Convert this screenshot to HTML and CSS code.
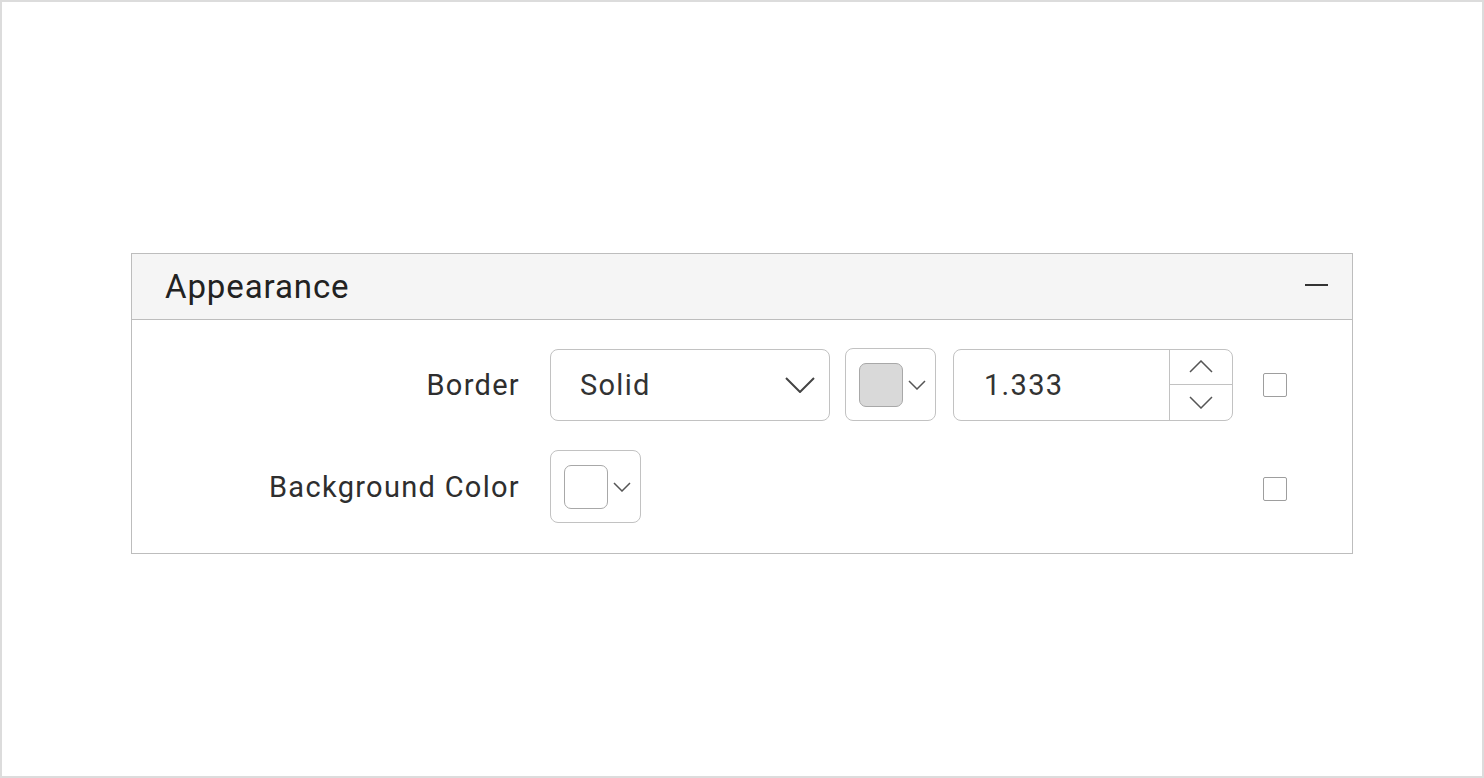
FILE: index.html
```html
<!DOCTYPE html>
<html>
<head>
  <link rel="stylesheet" href="styles.css">
</head>
<body>
  <div class="frame">
    <div class="panel">
      <div class="panel-header">
        <span class="panel-title">Appearance</span>
        <span class="collapse"></span>
      </div>
      <div class="panel-body">
        <div class="row">
          <label class="row-label">Border</label>
          <div class="select">
            <span>Solid</span>
            <svg width="30" height="16" viewBox="0 0 30 16"><path d="M1 1 L15 15 L29 1" fill="none" stroke="#444" stroke-width="2"/></svg>
          </div>
          <div class="color-picker">
            <span class="swatch grey"></span>
            <svg width="18" height="10" viewBox="0 0 18 10"><path d="M1 1 L9 9 L17 1" fill="none" stroke="#555" stroke-width="1.5"/></svg>
          </div>
          <div class="numeric">
            <span class="numeric-value">1.333</span>
            <div class="spin">
              <div class="spin-btn">
                <svg width="24" height="13" viewBox="0 0 24 13"><path d="M1 12 L12 1 L23 12" fill="none" stroke="#555" stroke-width="1.5"/></svg>
              </div>
              <div class="spin-btn">
                <svg width="24" height="13" viewBox="0 0 24 13"><path d="M1 1 L12 12 L23 1" fill="none" stroke="#555" stroke-width="1.5"/></svg>
              </div>
            </div>
          </div>
          <span class="checkbox"></span>
        </div>
        <div class="row">
          <label class="row-label">Background Color</label>
          <div class="color-picker">
            <span class="swatch"></span>
            <svg width="18" height="10" viewBox="0 0 18 10"><path d="M1 1 L9 9 L17 1" fill="none" stroke="#555" stroke-width="1.5"/></svg>
          </div>
          <div class="spacer"></div>
          <span class="checkbox low"></span>
        </div>
      </div>
    </div>
  </div>
</body>
</html>
```
FILE: styles.css
```css
body {
  margin: 0;
  font-family: Roboto, "Liberation Sans", sans-serif;
  color: #333;
  background: #fff;
}

.frame {
  width: 1484px;
  height: 778px;
  box-sizing: border-box;
  border: 2px solid #dcdcdc;
  padding: 251px 0 0 129px;
}

.panel {
  width: 1222px;
  box-sizing: border-box;
  border: 1px solid #bdbdbd;
  background: #fff;
}

.panel-header {
  height: 65px;
  display: flex;
  align-items: center;
  justify-content: space-between;
  padding: 0 24px 0 33px;
  background: #f5f5f5;
  border-bottom: 1px solid #bdbdbd;
}

.panel-title {
  font-size: 33px;
  letter-spacing: 0.9px;
  color: #222;
}

.collapse {
  width: 23px;
  height: 2px;
  background: #333;
  margin-bottom: 4px;
}

.panel-body {
  display: flex;
  flex-direction: column;
  gap: 29px;
  padding: 28px 0 30px 0;
}

.row {
  display: flex;
  align-items: center;
}

.row-label {
  width: 388px;
  text-align: right;
  font-size: 29px;
  letter-spacing: 1.3px;
  margin-right: 30px;
  color: #2e2e2e;
}

.select {
  width: 280px;
  height: 72px;
  box-sizing: border-box;
  border: 1px solid #c2c2c2;
  border-radius: 8px;
  display: flex;
  align-items: center;
  justify-content: space-between;
  padding: 0 14px 0 29px;
  font-size: 29px;
  letter-spacing: 1.3px;
  margin-right: 15px;
}

.color-picker {
  width: 91px;
  height: 73px;
  box-sizing: border-box;
  border: 1px solid #c2c2c2;
  border-radius: 8px;
  display: flex;
  align-items: center;
  gap: 5px;
  padding-left: 13px;
  margin-right: 17px;
}

.swatch {
  width: 44px;
  height: 44px;
  box-sizing: border-box;
  border: 1.5px solid #a8a8a8;
  border-radius: 7px;
  background: #fff;
}

.swatch.grey {
  background: #d9d9d9;
}

.numeric {
  width: 280px;
  height: 72px;
  box-sizing: border-box;
  border: 1px solid #c2c2c2;
  border-radius: 8px;
  display: flex;
  align-items: center;
  margin-right: 30px;
}

.numeric-value {
  flex: 1;
  font-size: 29px;
  letter-spacing: 1.3px;
  padding-left: 30px;
}

.spin {
  width: 62px;
  height: 100%;
  display: flex;
  flex-direction: column;
  border-left: 1px solid #c2c2c2;
}

.spin-btn {
  flex: 1;
  display: flex;
  align-items: center;
  justify-content: center;
}

.spin-btn + .spin-btn {
  border-top: 1px solid #c2c2c2;
}

.spacer {
  width: 605px;
}

.checkbox {
  width: 24px;
  height: 24px;
  box-sizing: border-box;
  border: 1.5px solid #9e9e9e;
  border-radius: 2px;
}

.checkbox.low {
  margin-top: 5px;
}
```
